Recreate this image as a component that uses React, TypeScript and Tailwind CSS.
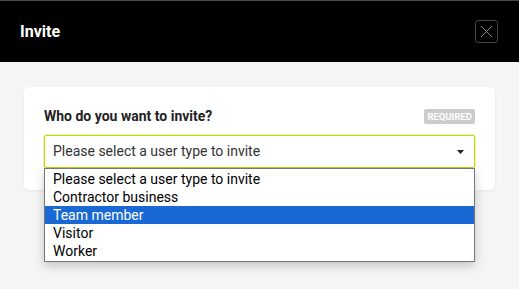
import { X } from 'lucide-react';

const options = [
  'Please select a user type to invite',
  'Contractor business',
  'Team member',
  'Visitor',
  'Worker',
];

export default function App() {
  return (
    <div
      className="h-[289px] w-[519px] overflow-hidden bg-[#f5f5f5]"
      style={{ fontFamily: 'Roboto, "Noto Sans", sans-serif' }}
    >
      <div className="flex h-[62px] items-center justify-between border-t border-[#4a4a4a] bg-black pl-5 pr-[21px]">
        <h2 className="text-[16px] font-bold text-white">Invite</h2>
        <button className="flex h-[23px] w-[23px] items-center justify-center rounded-[3px] border border-[#444]">
          <X size={23} strokeWidth={1} className="text-[#a0a0a0]" />
        </button>
      </div>

      <div className="px-6 pt-[25px]">
        <div className="rounded-[5px] bg-white px-5 pt-[19px] pb-[22px] shadow-[0_1px_3px_rgba(0,0,0,0.06)]">
          <div className="flex items-center justify-between">
            <label className="text-[14px] font-bold leading-5 text-[#222]">
              Who do you want to invite?
            </label>
            <span className="rounded-[2px] bg-[#cccccc] px-[3px] py-[1px] text-[9.5px] font-bold leading-[13px] text-white">
              REQUIRED
            </span>
          </div>
          <div className="relative mt-[9px]">
            <div className="flex h-[33px] items-center justify-between rounded-[2px] border border-[#c9d400] pl-[8px] pr-[10px] shadow-[0_0_0_1px_rgba(201,212,0,0.25)]">
              <span className="text-[14px] text-[#333]">{options[0]}</span>
              <svg width="7" height="4" viewBox="0 0 7 4">
                <path d="M0 0h7L3.5 4z" fill="#222" />
              </svg>
            </div>
            <ul className="absolute left-0 right-0 top-[33px] border border-[#767676] bg-white py-px shadow-[0_4px_10px_rgba(0,0,0,0.2)]">
              {options.map((o) => (
                <li
                  key={o}
                  className={`h-[18px] pl-[8px] text-[14px] leading-[18px] ${
                    o === 'Team member' ? 'bg-[#1a68d4] text-white' : 'text-black'
                  }`}
                >
                  {o}
                </li>
              ))}
            </ul>
          </div>
        </div>
      </div>
    </div>
  );
}
